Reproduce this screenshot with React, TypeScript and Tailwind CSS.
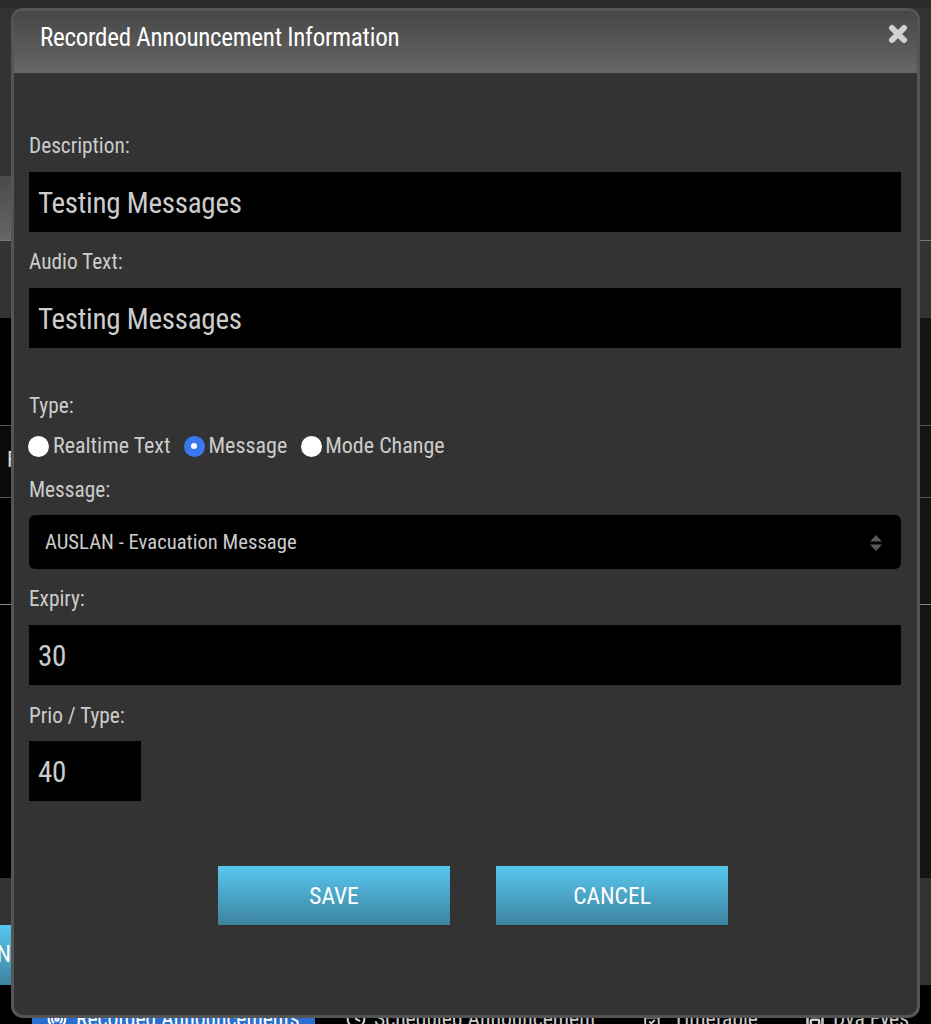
import { CalendarCheck, Clock, Radio as RadioIcon, Save } from 'lucide-react'

const narrow = { fontFamily: 'Roboto, "Liberation Sans", sans-serif' }

function Label({ children }: { children: React.ReactNode }) {
  return <label className="block h-[24px] pt-[1px] text-[21.3px] leading-[24px] text-[#cccccc]">{children}</label>
}

function Field({ value, className }: { value: string; className: string }) {
  return <div className={`flex h-[60px] items-center bg-black pl-[9px] pt-[4px] text-[29px] tracking-[-0.25px] text-[#cccccc] ${className}`}>{value}</div>
}

function Radio({ label, checked, className }: { label: string; checked?: boolean; className: string }) {
  return (
    <span className={`flex items-center ${className}`}>
      {checked ? (
        <span className="flex h-[21px] w-[21px] items-center justify-center rounded-full bg-[#3b78f0]">
          <span className="h-[6px] w-[6px] rounded-full bg-white" />
        </span>
      ) : (
        <span className="h-[21px] w-[21px] rounded-full bg-white" />
      )}
      <span className="text-[22px] leading-[24px] text-[#cccccc]">{label}</span>
    </span>
  )
}

function Backdrop() {
  return (
    <div className="flex h-[1024px] w-[931px] flex-col overflow-hidden bg-black">
      <div className="h-[8px] shrink-0 bg-[#2b2b2b]" />
      <div className="h-[168px] shrink-0 bg-[#333333]" />
      <div className="flex h-[65px] shrink-0 border-b border-[#777777] bg-[#333333]">
        <div className="w-[11px] bg-gradient-to-b from-[#4a4a4a] to-[#666666]" />
      </div>
      <div className="h-[77px] shrink-0 bg-[#333333]" />
      <div className="h-[108px] shrink-0 border-b border-[#555555] bg-gradient-to-r from-black from-[2%] to-[#141414]" />
      <div className="h-[72px] shrink-0 overflow-hidden border-b border-[#555555] bg-gradient-to-r from-[#0a0a0a] to-[#141414] pl-[7px] pt-[22px] text-[22px] leading-[24px] text-[#dddddd]">F</div>
      <div className="h-[107px] shrink-0 border-b border-[#888888] bg-gradient-to-r from-black from-[2%] to-[#141414]" />
      <div className="h-[273px] shrink-0 bg-gradient-to-r from-black from-[2%] to-[#141414]" />
      <div className="h-[47px] shrink-0 bg-[#333333]" />
      <div className="flex h-[60px] shrink-0 bg-[#333333]">
        <div className="flex w-[11px] items-center justify-end overflow-hidden bg-gradient-to-b from-[#58c8ef] to-[#3d83a0] text-[23.5px] text-white">N</div>
      </div>
      <div className="h-[22px] shrink-0" />
      <div className="flex h-[24px] shrink-0 items-center text-[21.6px] leading-[24px] text-[#cccccc]">
        <div className="ml-[32px] flex h-[24px] w-[283px] items-center gap-[9px] bg-[#2a6fd0] pl-[15px] text-white"><RadioIcon size={20} strokeWidth={2.5} />Recorded Announcements</div>
        <div className="ml-[31px] flex w-[251px] items-center gap-[8px]"><Clock size={20} strokeWidth={2.5} />Scheduled Announcement</div>
        <div className="ml-[46px] flex w-[115px] items-center gap-[12px]"><CalendarCheck size={20} strokeWidth={2.5} />Timetable</div>
        <div className="ml-[47px] flex items-center gap-[8px]"><Save size={20} strokeWidth={3} />Dva Eyes</div>
      </div>
    </div>
  )
}

export default function App() {
  return (
    <div className="relative h-[1024px] w-[931px] overflow-hidden [font-stretch:75%]" style={narrow}>
      <Backdrop />
      <div className="absolute left-[11px] top-[8px] h-[1010px] w-[909px] overflow-hidden rounded-[12px] border-[3px] border-[#555555] bg-[#333333]">
        <div className="flex h-[62px] items-start justify-between border-b border-[#666666] bg-gradient-to-b from-[#474747] to-[#666666] pl-[26px] pr-[9px] pt-[11px]">
          <h1 className="text-[25px] leading-[32px] tracking-[-0.27px] text-white">Recorded Announcement Information</h1>
          <svg width="20" height="22" viewBox="0 0 20 22" className="mt-[1px]">
            <path d="M4 5 L16 17 M16 5 L4 17" stroke="#d2d2d2" strokeWidth="6" strokeLinecap="round" />
          </svg>
        </div>
        <div className="px-[15px] pt-[60px]">
          <Label>Description:</Label>
          <Field value="Testing Messages" className="mt-[15px] w-[872px]" />
          <div className="mt-[17px]"><Label>Audio Text:</Label></div>
          <Field value="Testing Messages" className="mt-[15px] w-[872px]" />
          <div className="mt-[45px]"><Label>Type:</Label></div>
          <div className="-ml-[1px] mt-[17px] flex h-[24px] items-center gap-[13px]">
            <Radio label="Realtime Text" className="gap-[4px]" />
            <Radio label="Message" checked className="gap-[4px]" />
            <Radio label="Mode Change" className="ml-[1px] gap-[3px]" />
          </div>
          <div className="mt-[19px]"><Label>Message:</Label></div>
          <div className="mt-[14px] flex h-[54px] w-[872px] items-center justify-between rounded-[6px] bg-black pl-[16px] pr-[19px] pt-[2px] text-[20.7px] text-[#cccccc]">
            <span>AUSLAN - Evacuation Message</span>
            <svg width="12" height="16" viewBox="0 0 12 16"><path d="M6 0 L12 6.5 H0 Z M0 9.5 H12 L6 16 Z" fill="#555a60" /></svg>
          </div>
          <div className="mt-[17px]"><Label>Expiry:</Label></div>
          <Field value="30" className="mt-[15px] w-[872px]" />
          <div className="mt-[18px]"><Label>Prio / Type:</Label></div>
          <Field value="40" className="mt-[14px] w-[112px]" />
          <div className="mt-[65px] flex gap-[46px] pl-[189px]">
            <button className="h-[59px] w-[232px] bg-gradient-to-b from-[#58c8ef] to-[#3d83a0] pt-[2px] text-[23.5px] text-white">SAVE</button>
            <button className="h-[59px] w-[232px] bg-gradient-to-b from-[#58c8ef] to-[#3d83a0] pt-[2px] text-[23.5px] text-white">CANCEL</button>
          </div>
        </div>
      </div>
    </div>
  )
}
